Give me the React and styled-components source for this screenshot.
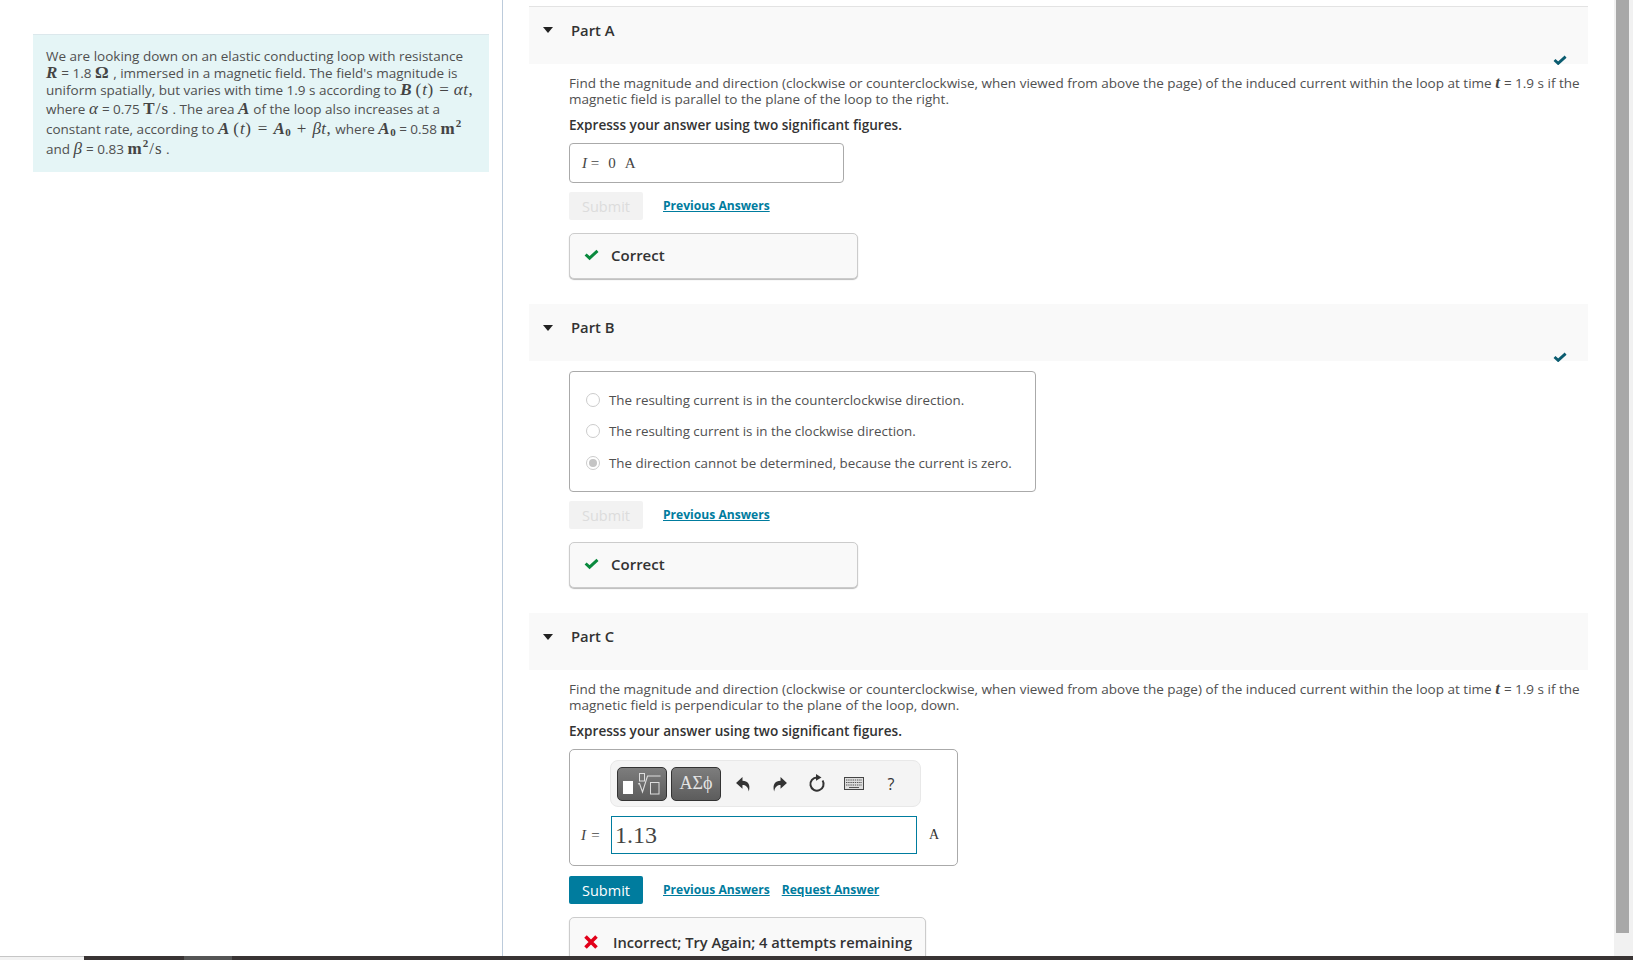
import React from 'react'
import styled, { createGlobalStyle } from 'styled-components'

const GlobalStyle = createGlobalStyle`
  html, body { margin: 0; padding: 0; background: #fff; }
  body { font-family: 'Open Sans', 'Noto Sans', sans-serif; font-size: 13.5px; color: #505050; }
  * { box-sizing: border-box; }
`

const Page = styled.div`
  width: 1633px;
  height: 960px;
  display: flex;
  flex-direction: column;
  overflow: hidden;
`
const Main = styled.div`
  display: flex;
  height: 956px;
  overflow: hidden;
`
const LeftColumn = styled.aside`
  width: 503px;
  flex: none;
  padding: 34px 13px 0 33px;
  border-right: 1px solid #bccbdb;
`
const Intro = styled.div`
  height: 138px;
  padding: 13px 12px 0 13px;
  background: #e5f5f6;
  border-top: 1px solid #dce8ec;
`
const IntroLine = styled.div`
  height: ${p => p.$h}px;
  line-height: ${p => p.$h}px;
  white-space: nowrap;
`
const RightColumn = styled.main`
  flex: 1;
  min-width: 0;
  padding: 6px 26px 0 26px;
`
const Scrollbar = styled.div`
  width: 19px;
  flex: none;
  padding-left: 2px;
  background: #f1f1f1;
`
const Thumb = styled.div`
  width: 13px;
  height: 933px;
  background: #a8a8a8;
`
const PartHeader = styled.header`
  position: relative;
  height: ${p => (p.$ruled ? 58 : 57)}px;
  padding: 12px 0 0 42px;
  background: #f9f9f9;
  border-top: ${p => (p.$ruled ? '1px solid #e3e3e3' : 'none')};
  font-size: 14.8px;
  font-weight: 600;
  line-height: 22px;
  color: #333;
`
const Caret = styled.span`
  position: absolute;
  left: 14px;
  top: ${p => (p.$ruled ? 20 : 21)}px;
  width: 0;
  height: 0;
  border-left: 5.5px solid transparent;
  border-right: 5.5px solid transparent;
  border-top: 6px solid #222;
`
const DoneMark = styled.span`
  position: absolute;
  right: 21px;
  bottom: -1px;
  display: flex;
`
const PartBody = styled.section`
  padding-left: 40px;
  margin-bottom: 25px;
`
const Question = styled.p`
  margin: 11px 0 0;
  line-height: 16px;
  white-space: nowrap;
`
const Instruction = styled.p`
  margin: 10px 0 0;
  line-height: 16px;
  font-size: 13.6px;
  font-weight: 600;
  color: #333;
`
const AnswerBox = styled.div`
  display: flex;
  align-items: center;
  gap: 9px;
  width: 275px;
  height: 40px;
  margin-top: 10px;
  padding-left: 12px;
  border: 1px solid #aaa;
  border-radius: 4px;
  color: #444;
  font-family: 'Liberation Serif', serif;
  font-size: 15px;
`
const Actions = styled.div`
  display: flex;
  align-items: center;
  margin-top: ${p => p.$top || 9}px;
`
const SubmitButton = styled.button`
  width: 74px;
  height: 28px;
  padding: 0;
  border: none;
  border-radius: 2px;
  font-family: inherit;
  font-size: 14.5px;
  background: ${p => (p.$active ? '#007c9e' : '#f2f2f2')};
  color: ${p => (p.$active ? '#fff' : '#dcdcdc')};
`
const ActionLink = styled.a`
  margin-left: ${p => p.$gap}px;
  margin-bottom: 2px;
  font-size: 12.1px;
  font-weight: 700;
  color: #007c9e;
  text-decoration: underline;
`
const Feedback = styled.div`
  display: flex;
  align-items: center;
  flex: none;
  width: ${p => p.$w}px;
  height: ${p => p.$h || 46}px;
  margin-top: 13px;
  padding: 0 0 2px 14px;
  background: #f9f9f9;
  border: 1px solid #ccc;
  border-radius: 5px;
  box-shadow: 0 1px 1px #bbb;
  font-size: ${p => p.$size || 15}px;
  font-weight: 600;
  color: #333;
`
const FeedbackIcon = styled.span`
  display: flex;
  width: ${p => p.$w}px;
  flex: none;
`
const Choices = styled.div`
  width: 467px;
  height: 121px;
  margin-top: 10px;
  padding-top: 12px;
  border: 1px solid #aaa;
  border-radius: 4px;
`
const Choice = styled.div`
  display: flex;
  align-items: center;
  height: ${p => p.$h}px;
  padding-left: 16px;
  font-size: 13.35px;
`
const Radio = styled.span`
  position: relative;
  width: 14px;
  height: 14px;
  margin-right: 9px;
  border: 1px solid #ccc;
  border-radius: 50%;
  background: #fff;
  &::after {
    content: '';
    display: ${p => (p.$on ? 'block' : 'none')};
    position: absolute;
    inset: 2px;
    border-radius: 50%;
    background: #c4c4c4;
  }
`
const Editor = styled.div`
  width: 389px;
  height: 117px;
  margin-top: 10px;
  padding: 10px 0 0 11px;
  border: 1px solid #aaa;
  border-radius: 5px;
`
const Toolbar = styled.div`
  display: flex;
  align-items: center;
  width: 311px;
  height: 47px;
  margin-left: 29px;
  padding-left: 6px;
  background: #f4f4f4;
  border: 1px solid #e8e8e8;
  border-radius: 8px;
`
const TemplateButton = styled.div`
  display: flex;
  align-items: center;
  justify-content: center;
  width: 50px;
  height: 34px;
  margin-right: 4px;
  border: 1px solid #333;
  border-radius: 5px;
  background: linear-gradient(#7d7d7d, #5c5c5c);
  color: #e4e4e4;
  font-family: 'Liberation Serif', serif;
  font-size: 18px;
`
const ToolIcon = styled.span`
  display: flex;
  justify-content: center;
  width: ${p => p.$w}px;
  color: #333;
  font-size: ${p => p.$size || 14}px;
`
const InputRow = styled.div`
  display: flex;
  align-items: center;
  margin-top: 9px;
`
const InputLabel = styled.span`
  width: 30px;
  flex: none;
  font-size: 15px;
  letter-spacing: 0.8px;
  color: #444;
  font-family: 'Liberation Serif', serif;
`
const MathInput = styled.div`
  width: 306px;
  height: 38px;
  padding-left: 3px;
  border: 1px solid #007c9e;
  font-family: 'Liberation Serif', serif;
  font-size: 24px;
  line-height: 36px;
  color: #444;
`
const InputUnit = styled.span`
  margin-left: 12px;
  font-family: 'Liberation Serif', serif;
  font-size: 14px;
  color: #333;
`
const BottomBar = styled.footer`
  display: flex;
  height: 4px;
  background: #393434;
`
const BarSegment = styled.div`
  width: ${p => p.$w}px;
  flex: none;
  background: ${p => p.$bg};
  border-top: ${p => (p.$ruled ? '1px solid #c6c6c6' : 'none')};
`
const Mi = styled.i`
  font-family: 'Liberation Serif', serif;
  font-size: 17px;
  font-weight: ${p => (p.$bold ? 700 : 400)};
  letter-spacing: 0.5px;
  color: #444;
`
const Mn = styled.span`
  font-family: 'Liberation Serif', serif;
  font-size: 17px;
  font-weight: ${p => (p.$bold ? 700 : 400)};
  letter-spacing: 1px;
  color: #444;
`
const Mo = styled.span`
  margin: 0 ${p => p.$gap || 5}px;
  font-family: 'Liberation Serif', serif;
  font-size: 17px;
  color: #444;
`
const Sub = styled.span`
  font-family: 'Liberation Serif', serif;
  font-size: 11px;
  font-weight: 700;
  color: #444;
  vertical-align: -2px;
  line-height: 0;
`
const Sup = styled.sup`
  font-size: 11px;
  line-height: 0;
`

const CheckIcon = ({ color, w, h }) => (
  <svg width={w} height={h} viewBox="0 0 14 10.500" fill="none">
    <path d="M1.500 5L5.200 8.400L12.600 1.600" stroke={color} strokeWidth="2.800" />
  </svg>
)

const CrossIcon = () => (
  <svg width="14" height="14" viewBox="0 0 14 14" fill="none">
    <path d="M1.500 1.500L12.500 12.500M12.500 1.500L1.500 12.500" stroke="#e2001a" strokeWidth="3.600" />
  </svg>
)

const SqrtTemplateIcon = () => (
  <svg width="38" height="22" viewBox="0 0 38 22" fill="none">
    <rect x="0" y="8" width="10" height="13" fill="#fff" />
    <rect x="16.500" y="0.500" width="5" height="7.500" stroke="#ddd" />
    <path d="M15 11l1.500 -0.500l3 8.500l5 -16h13" stroke="#ddd" strokeWidth="1.100" />
    <rect x="27.500" y="9.500" width="8.500" height="11.500" stroke="#ddd" />
  </svg>
)

const UndoIcon = ({ flip }) => (
  <svg width="16" height="16" viewBox="0 0 15 15" style={flip ? { transform: 'scaleX(-1)' } : undefined}>
    <path d="M7 1L1 6.500L7 12V8.500C10 8.500 12 10 13 14.500C14.800 8 12 4.500 7 4.500Z" fill="#333" />
  </svg>
)

const RedoCircleIcon = () => (
  <svg width="18" height="19" viewBox="0 0 18 19" fill="none">
    <path d="M9 3.400A6.600 6.600 0 1 0 14.600 6.500" stroke="#333" strokeWidth="2" />
    <path d="M8 0L13.500 3.400L8 6.800Z" fill="#333" />
  </svg>
)

const KeyboardIcon = () => (
  <svg width="20" height="13" viewBox="0 0 20 13" fill="none">
    <rect x="0.500" y="0.500" width="19" height="12" fill="#ddd" stroke="#444" />
    <path d="M2 3h16M2 5.500h16M2 8h16" stroke="#555" strokeDasharray="1.400 0.800" />
    <path d="M5 10.500h10" stroke="#555" />
  </svg>
)

const PartTitle = ({ name, ruled, done }) => (
  <PartHeader $ruled={ruled}>
    <Caret $ruled={ruled} />
    {name}
    {done && <DoneMark><CheckIcon color="#0b5c70" w={14} h={10.5} /></DoneMark>}
  </PartHeader>
)

const CorrectBox = () => (
  <Feedback $w={289}>
    <FeedbackIcon $w={27}><CheckIcon color="#0a8a3e" w={15} h={11.5} /></FeedbackIcon>
    Correct
  </Feedback>
)

export default function App () {
  return (
    <Page>
      <GlobalStyle />
      <Main>
        <LeftColumn>
          <Intro>
            <IntroLine $h={16}>We are looking down on an elastic conducting loop with resistance</IntroLine>
            <IntroLine $h={17}><Mi $bold>R</Mi> = 1.8 <Mn $bold>Ω</Mn> , immersed in a magnetic field. The field's magnitude is</IntroLine>
            <IntroLine $h={18}>uniform spatially, but varies with time 1.9 s according to <Mi $bold>B</Mi> <Mn>(<Mi>t</Mi>)</Mn><Mo>=</Mo><Mi>αt</Mi><Mn>,</Mn></IntroLine>
            <IntroLine $h={20}>where <Mi>α</Mi> = 0.75 <Mn $bold>T</Mn><Mn>/s</Mn> . The area <Mi $bold>A</Mi> of the loop also increases at a</IntroLine>
            <IntroLine $h={20}>constant rate, according to <Mi $bold>A</Mi> <Mn>(<Mi>t</Mi>)</Mn><Mo $gap={6}>=</Mo><Mi $bold>A</Mi><Sub>0</Sub><Mo $gap={6}>+</Mo><Mi>βt</Mi><Mn>,</Mn> where <Mi $bold>A</Mi><Sub>0</Sub> = 0.58 <Mn $bold>m<Sup>2</Sup></Mn></IntroLine>
            <IntroLine $h={20}>and <Mi>β</Mi> = 0.83 <Mn $bold>m<Sup>2</Sup></Mn><Mn>/s</Mn> .</IntroLine>
          </Intro>
        </LeftColumn>

        <RightColumn>
          <PartTitle name="Part A" ruled done />
          <PartBody>
            <Question>
              Find the magnitude and direction (clockwise or counterclockwise, when viewed from above the page) of the induced current within the loop at time <Mi $bold>t</Mi> = 1.9 s if the<br />
              magnetic field is parallel to the plane of the loop to the right.
            </Question>
            <Instruction>Expresss your answer using two significant figures.</Instruction>
            <AnswerBox><span><i>I</i> =</span><span>0</span><span>A</span></AnswerBox>
            <Actions>
              <SubmitButton disabled>Submit</SubmitButton>
              <ActionLink $gap={20}>Previous Answers</ActionLink>
            </Actions>
            <CorrectBox />
          </PartBody>

          <PartTitle name="Part B" done />
          <PartBody>
            <Choices>
              <Choice $h={31}><Radio />The resulting current is in the counterclockwise direction.</Choice>
              <Choice $h={31}><Radio />The resulting current is in the clockwise direction.</Choice>
              <Choice $h={34}><Radio $on />The direction cannot be determined, because the current is zero.</Choice>
            </Choices>
            <Actions>
              <SubmitButton disabled>Submit</SubmitButton>
              <ActionLink $gap={20}>Previous Answers</ActionLink>
            </Actions>
            <CorrectBox />
          </PartBody>

          <PartTitle name="Part C" />
          <PartBody>
            <Question>
              Find the magnitude and direction (clockwise or counterclockwise, when viewed from above the page) of the induced current within the loop at time <Mi $bold>t</Mi> = 1.9 s if the<br />
              magnetic field is perpendicular to the plane of the loop, down.
            </Question>
            <Instruction>Expresss your answer using two significant figures.</Instruction>
            <Editor>
              <Toolbar>
                <TemplateButton><SqrtTemplateIcon /></TemplateButton>
                <TemplateButton>ΑΣϕ</TemplateButton>
                <ToolIcon $w={36}><UndoIcon /></ToolIcon>
                <ToolIcon $w={38}><UndoIcon flip /></ToolIcon>
                <ToolIcon $w={36}><RedoCircleIcon /></ToolIcon>
                <ToolIcon $w={38}><KeyboardIcon /></ToolIcon>
                <ToolIcon $w={36} $size={16}>?</ToolIcon>
              </Toolbar>
              <InputRow>
                <InputLabel><i>I</i> =</InputLabel>
                <MathInput>1.13</MathInput>
                <InputUnit>A</InputUnit>
              </InputRow>
            </Editor>
            <Actions $top={10}>
              <SubmitButton $active>Submit</SubmitButton>
              <ActionLink $gap={20}>Previous Answers</ActionLink>
              <ActionLink $gap={12}>Request Answer</ActionLink>
            </Actions>
            <Feedback $w={357} $h={52} $size={14.7}>
              <FeedbackIcon $w={29}><CrossIcon /></FeedbackIcon>
              Incorrect; Try Again; 4 attempts remaining
            </Feedback>
          </PartBody>
        </RightColumn>

        <Scrollbar><Thumb /></Scrollbar>
      </Main>
      <BottomBar>
        <BarSegment $w={84} $bg="#f2f2f2" $ruled />
        <BarSegment $w={100} $bg="#393434" />
        <BarSegment $w={48} $bg="#555" />
      </BottomBar>
    </Page>
  )
}
